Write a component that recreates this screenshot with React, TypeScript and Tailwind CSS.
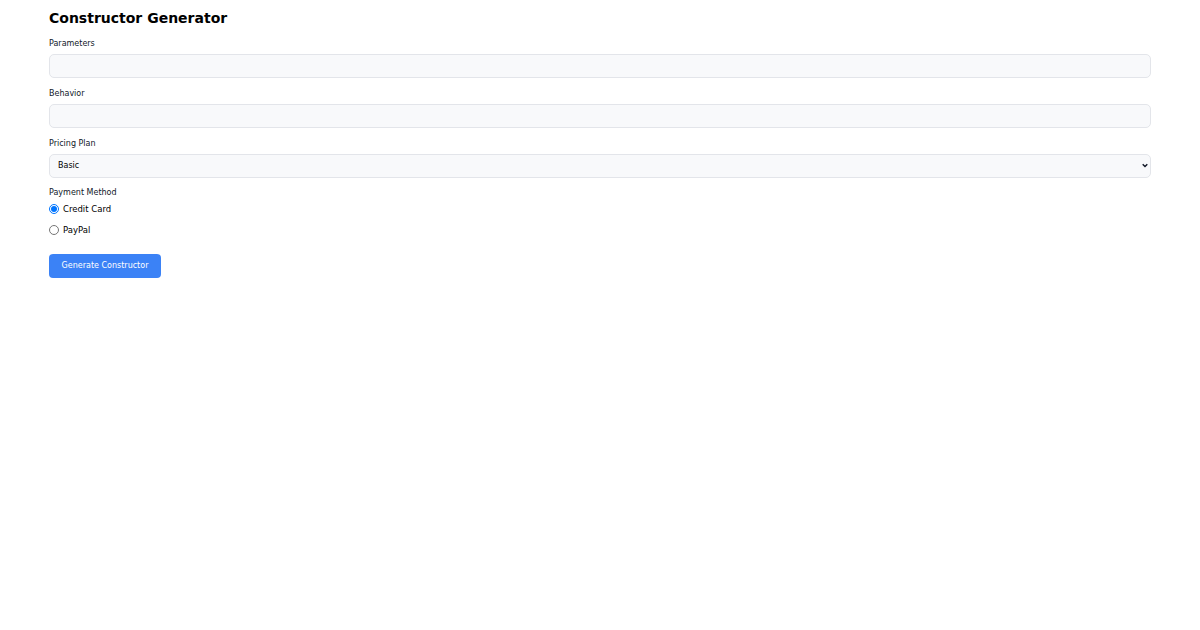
import { useState } from "react"

export default function App() {
  const [params, setParams] = useState("")
  const [behavior, setBehavior] = useState("")
  const [plan, setPlan] = useState("basic")
  const [payment, setPayment] = useState("card")

  return (
    <div className="min-h-screen bg-white px-[49px] pt-[8px] text-black" style={{ fontFamily: '"DejaVu Sans", sans-serif' }}>
      <h1 className="text-[14px] font-bold leading-[20px] mb-[10px]">Constructor Generator</h1>

      <div className="mb-[10px]">
        <label className="block text-[8px] leading-[11px] mb-[5px] text-gray-900">Parameters</label>
        <input
          value={params}
          onChange={(e) => setParams(e.target.value)}
          className="block w-full h-[24px] bg-[#f8f9fb] border border-[#e3e5ea] rounded-[5px] px-[8px] text-[8px] outline-none"
        />
      </div>

      <div className="mb-[10px]">
        <label className="block text-[8px] leading-[11px] mb-[5px] text-gray-900">Behavior</label>
        <input
          value={behavior}
          onChange={(e) => setBehavior(e.target.value)}
          className="block w-full h-[24px] bg-[#f8f9fb] border border-[#e3e5ea] rounded-[5px] px-[8px] text-[8px] outline-none"
        />
      </div>

      <div className="mb-[9px]">
        <label className="block text-[8px] leading-[11px] mb-[5px] text-gray-900">Pricing Plan</label>
        <div className="relative">
          <select
            value={plan}
            onChange={(e) => setPlan(e.target.value)}
            className="block w-full h-[24px] appearance-none bg-[#f8f9fb] border border-[#e3e5ea] rounded-[5px] pl-[8px] pr-[16px] text-[8px] text-black outline-none"
          >
            <option value="basic">Basic</option>
            <option value="pro">Pro</option>
            <option value="enterprise">Enterprise</option>
          </select>
          {/* small native-style chevron */}
          <svg
            className="pointer-events-none absolute right-[3px] top-[9px] w-[6px] h-[5px]"
            viewBox="0 0 6 5"
            fill="none"
            stroke="#111827"
            strokeWidth="1.4"
          >
            <path d="M0.7 1.2 L3 3.6 L5.3 1.2" />
          </svg>
        </div>
      </div>

      <div>
        <label className="block text-[8px] leading-[11px] mb-[5px] text-gray-900">Payment Method</label>
        <div className="flex flex-col gap-[9px]">
          <label className="flex items-center h-[12px] text-[8.5px]">
            <input
              type="radio"
              name="payment"
              checked={payment === "card"}
              onChange={() => setPayment("card")}
              className="m-0 mr-[4px] w-[10px] h-[10px]"
            />
            Credit Card
          </label>
          <label className="flex items-center h-[12px] text-[8.5px]">
            <input
              type="radio"
              name="payment"
              checked={payment === "paypal"}
              onChange={() => setPayment("paypal")}
              className="m-0 mr-[4px] w-[10px] h-[10px]"
            />
            PayPal
          </label>
        </div>
      </div>

      <button className="mt-[18px] h-[24px] w-[112px] bg-[#3b82f6] hover:bg-blue-600 text-white text-[8px] rounded-[4px]">
        Generate Constructor
      </button>
    </div>
  )
}
